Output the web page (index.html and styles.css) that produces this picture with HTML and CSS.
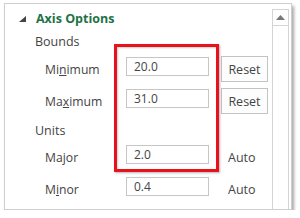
FILE: index.html
```html
<!DOCTYPE html>
<html lang="en">
<head>
    <meta charset="UTF-8">
    <title>Format Axis</title>
    <link rel="stylesheet" href="styles.css">
</head>
<body>
    <div class="pane">
        <div class="content">
            <div class="section-head">
                <svg class="caret" width="7" height="6" viewBox="0 0 7 6"><polygon points="7,0 7,6 0,6" fill="#444"/></svg>
                <span class="section-title">Axis Options</span>
            </div>
            <div class="group-label">Bounds</div>
            <div class="row">
                <span class="label">Mi<u>n</u>imum</span>
                <div class="field">20.0</div>
                <button class="reset-btn">Reset</button>
            </div>
            <div class="row">
                <span class="label">Ma<u>x</u>imum</span>
                <div class="field">31.0</div>
                <button class="reset-btn">Reset</button>
            </div>
            <div class="group-label units">Units</div>
            <div class="row">
                <span class="label">Ma<u>j</u>or</span>
                <div class="field">2.0</div>
                <span class="auto">Auto</span>
            </div>
            <div class="row">
                <span class="label">M<u>i</u>nor</span>
                <div class="field">0.4</div>
                <span class="auto">Auto</span>
            </div>
            <div class="highlight"></div>
        </div>
        <div class="scrollbar">
            <div class="scroll-up">
                <svg width="9" height="5" viewBox="0 0 9 5"><polygon points="4.5,0 9,5 0,5" fill="#777"/></svg>
            </div>
        </div>
    </div>
</body>
</html>
```

FILE: styles.css
```css
body {
    margin: 0;
    background: #fff;
    font-family: 'Open Sans', 'Noto Sans', sans-serif;
    font-size: 12px;
    color: #444;
}
.pane {
    margin: 3px 0 0 4px;
    width: 286px;
    height: 205px;
    border: 1px solid #cfcfcf;
    box-shadow: 2px 3px 3px rgba(0, 0, 0, 0.35);
    display: flex;
    background: #fff;
}
.content {
    position: relative;
    flex: 1;
}
.section-head {
    height: 28px;
    display: flex;
    align-items: center;
    padding-left: 14px;
}
.caret {
    margin-top: 1px;
}
.section-title {
    margin-left: 10px;
    color: #217346;
    font-weight: 700;
    font-size: 12.5px;
}
.group-label {
    height: 24px;
    line-height: 20px;
    padding-left: 30px;
    font-size: 12.5px;
}
.group-label.units {
    line-height: 22px;
}
.row {
    display: grid;
    grid-template-columns: 121px 83px 12px 47px;
    align-items: start;
    height: 32px;
}
.label {
    grid-column: 1;
    padding-left: 40px;
    line-height: 27px;
    font-size: 12.2px;
}
.field {
    grid-column: 2;
    margin-top: 1px;
    height: 17px;
    line-height: 17px;
    border: 1px solid #c6c6c6;
    padding-left: 7px;
}
.reset-btn {
    grid-column: 4;
    height: 26px;
    border: 1px solid #c3c3c3;
    background: #fdfdfd;
    font-family: inherit;
    font-size: 12.5px;
    color: #444;
    padding: 0;
}
.auto {
    grid-column: 4;
    padding-left: 7px;
    line-height: 27px;
    font-size: 12.5px;
}
.highlight {
    position: absolute;
    left: 109px;
    top: 40px;
    width: 99px;
    height: 122px;
    border: 3px solid #e8121c;
    box-shadow: 1px 1px 2px rgba(0, 0, 0, 0.3), inset 1px 1px 2px rgba(0, 0, 0, 0.2);
}
.scrollbar {
    width: 15px;
    margin: 5px 2px 0 0;
    border: 1px solid #d4d4d4;
    border-bottom: none;
}
.scroll-up {
    height: 15px;
    border-bottom: 1px solid #d4d4d4;
    display: flex;
    align-items: center;
    justify-content: center;
}
```
